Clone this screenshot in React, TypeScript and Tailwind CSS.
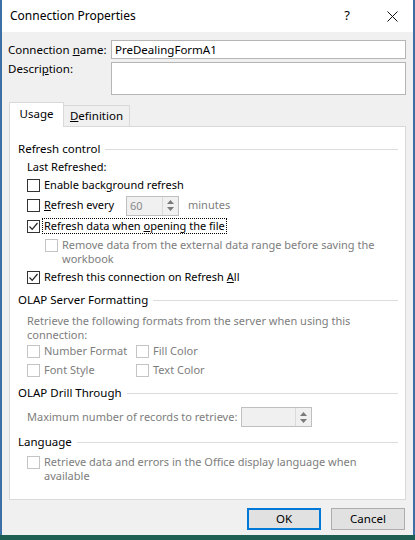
import React from "react";

const font = { fontFamily: '"Noto Sans", "Open Sans", sans-serif' };

function Box({ checked, disabled }: { checked?: boolean; disabled?: boolean }) {
  return (
    <span
      className={`relative inline-block w-[13px] h-[13px] border bg-white shrink-0 ${
        disabled ? "border-[#c4c4c4]" : "border-[#333333]"
      }`}
    >
      {checked && (
        <svg className="absolute left-0 top-0" width="11" height="11" viewBox="0 0 11 11">
          <path d="M1.5 5.5 L4.2 8.3 L9.5 2" fill="none" stroke="#222" strokeWidth="1.2" />
        </svg>
      )}
    </span>
  );
}

function Section({ title }: { title: string }) {
  return (
    <div className="flex items-center h-[18px] text-black text-[11.5px]">
      <span className="pr-[5px]">{title}</span>
      <div className="flex-1 h-px bg-[#dcdcdc]" />
    </div>
  );
}

function Spin({ value, w }: { value?: string; w: number }) {
  return (
    <div
      className="flex h-[20px] border border-[#bfbfbf] bg-[#f0f0f0]"
      style={{ width: w }}
    >
      <div className="flex-1 pl-[3px] leading-[18px] text-[#8a8a8a]">{value}</div>
      <div className="w-[16px] border-l border-[#dadada] flex flex-col items-center justify-center gap-[3px]">
        <svg width="7" height="4" viewBox="0 0 7 4">
          <path d="M0 4 L3.5 0 L7 4Z" fill="#7a7a7a" />
        </svg>
        <svg width="7" height="4" viewBox="0 0 7 4">
          <path d="M0 0 L3.5 4 L7 0Z" fill="#7a7a7a" />
        </svg>
      </div>
    </div>
  );
}

export default function App() {
  return (
    <div
      className="w-[415px] h-[540px] flex flex-col bg-[#3d6fa6] text-[11px] overflow-hidden"
      style={font}
    >
      <div className="flex-1 flex flex-col mx-[2px] bg-[#f0f0f0]">
        {/* title bar */}
        <div className="h-[32px] bg-white flex items-center pl-[8px] text-black">
          <span className="flex-1 text-[12px]">Connection Properties</span>
          <span className="w-[20px] text-center mr-[30px] text-[13px]">?</span>
          <svg className="mr-[15px]" width="11" height="11" viewBox="0 0 11 11">
            <path d="M0.5 0.5 L10.5 10.5 M10.5 0.5 L0.5 10.5" stroke="#111" strokeWidth="1" />
          </svg>
        </div>

        {/* connection name */}
        <div className="flex items-center mt-[8px] pl-[6px] pr-[7px] text-[11.5px]">
          <span className="w-[103px]">
            Connection <u>n</u>ame:
          </span>
          <div className="flex-1 h-[19px] bg-white border border-[#b5b5b5] pl-[3px] leading-[17px]">
            PreDealingFormA1
          </div>
        </div>
        <div className="flex mt-[3px] pl-[6px] pr-[7px] text-[11.5px]">
          <span className="w-[103px] leading-[14px]">
            Descri<u>p</u>tion:
          </span>
          <div className="flex-1 h-[33px] bg-white border border-[#b5b5b5]" />
        </div>

        {/* tabs */}
        <div className="flex items-end mt-[6px] pl-[7px] h-[25px] text-[11.5px]">
          <div className="w-[55px] h-[25px] bg-white border border-b-0 border-[#d9d9d9] flex items-center justify-center relative z-10 -mb-px pb-[3px]">
            Usa<u>g</u>e
          </div>
          <div className="w-[66px] h-[21px] border border-l-0 border-b-0 border-[#d9d9d9] bg-[#f0f0f0] flex items-center justify-center pb-[1px]">
            <u>D</u>efinition
          </div>
        </div>

        {/* panel */}
        <div className="mx-[7px] h-[374px] bg-white border border-[#d9d9d9] pl-[8px] pr-[7px] pt-[13px]">
          <Section title="Refresh control" />
          <div className="pl-[9px]">
            <div className="h-[18px] leading-[18px]">Last Refreshed:</div>
            <label className="flex items-center gap-[4px] h-[19px]">
              <Box />
              <span>
                Enable back<u>g</u>round refresh
              </span>
            </label>
            <div className="flex items-center h-[21px]">
              <Box />
              <span className="ml-[4px] w-[82px]">
                <u>R</u>efresh every
              </span>
              <Spin value="60" w={53} />
              <span className="ml-[9px] text-[#7d7d7d]">minutes</span>
            </div>
            <div className="flex items-center h-[20px]">
              <Box checked />
              <span className="ml-[2px] px-[1px] border border-dotted border-black leading-[14px]">
                Refresh data when <u>o</u>pening the file
              </span>
            </div>
            <div className="flex pl-[18px] mt-[2px] text-[#7d7d7d]">
              <div className="pt-[1px]">
                <Box disabled />
              </div>
              <span className="ml-[4px] leading-[14px]">
                Remove data from the external data range before saving the workbook
              </span>
            </div>
            <div className="flex items-center gap-[4px] h-[19px] mt-[2px]">
              <Box checked />
              <span>
                Refresh this connection on Refresh <u>A</u>ll
              </span>
            </div>
          </div>

          <div className="mt-[4px]">
            <Section title="OLAP Server Formatting" />
          </div>
          <div className="pl-[9px] text-[#7d7d7d]">
            <div className="leading-[14px] mt-[5px]">
              Retrieve the following formats from the server when using this connection:
            </div>
            <div className="grid grid-cols-[109px_1fr]">
              <div className="flex items-center gap-[4px] h-[19px]">
                <Box disabled />
                <span>Number Format</span>
              </div>
              <div className="flex items-center gap-[4px] h-[19px]">
                <Box disabled />
                <span>Fill Color</span>
              </div>
              <div className="flex items-center gap-[4px] h-[19px]">
                <Box disabled />
                <span>Font Style</span>
              </div>
              <div className="flex items-center gap-[4px] h-[19px]">
                <Box disabled />
                <span>Text Color</span>
              </div>
            </div>
          </div>

          <div className="mt-[4px]">
            <Section title="OLAP Drill Through" />
          </div>
          <div className="pl-[9px] flex items-center h-[22px] mt-[4px] text-[#7d7d7d]">
            <span className="w-[214px] whitespace-nowrap">Maximum number of records to retrieve:</span>
            <Spin w={71} />
          </div>

          <div className="mt-[5px]">
            <Section title="Language" />
          </div>
          <div className="pl-[9px] flex mt-[4px] text-[#7d7d7d]">
            <div className="pt-[1px]">
              <Box disabled />
            </div>
            <span className="ml-[4px] leading-[14px]">
              Retrieve data and errors in the Office display language when available
            </span>
          </div>
        </div>

        {/* buttons */}
        <div className="flex justify-end gap-[10px] pr-[8px] mt-[8px] text-[11.5px]">
          <button className="w-[74px] h-[22px] bg-[#e1e1e1] border-2 border-[#0078d7] text-black">
            OK
          </button>
          <button className="w-[74px] h-[22px] bg-[#e1e1e1] border border-[#adadad] text-black">
            Cancel
          </button>
        </div>
      </div>
      <div className="h-[5px] bg-[#1f5e52]" />
    </div>
  );
}
